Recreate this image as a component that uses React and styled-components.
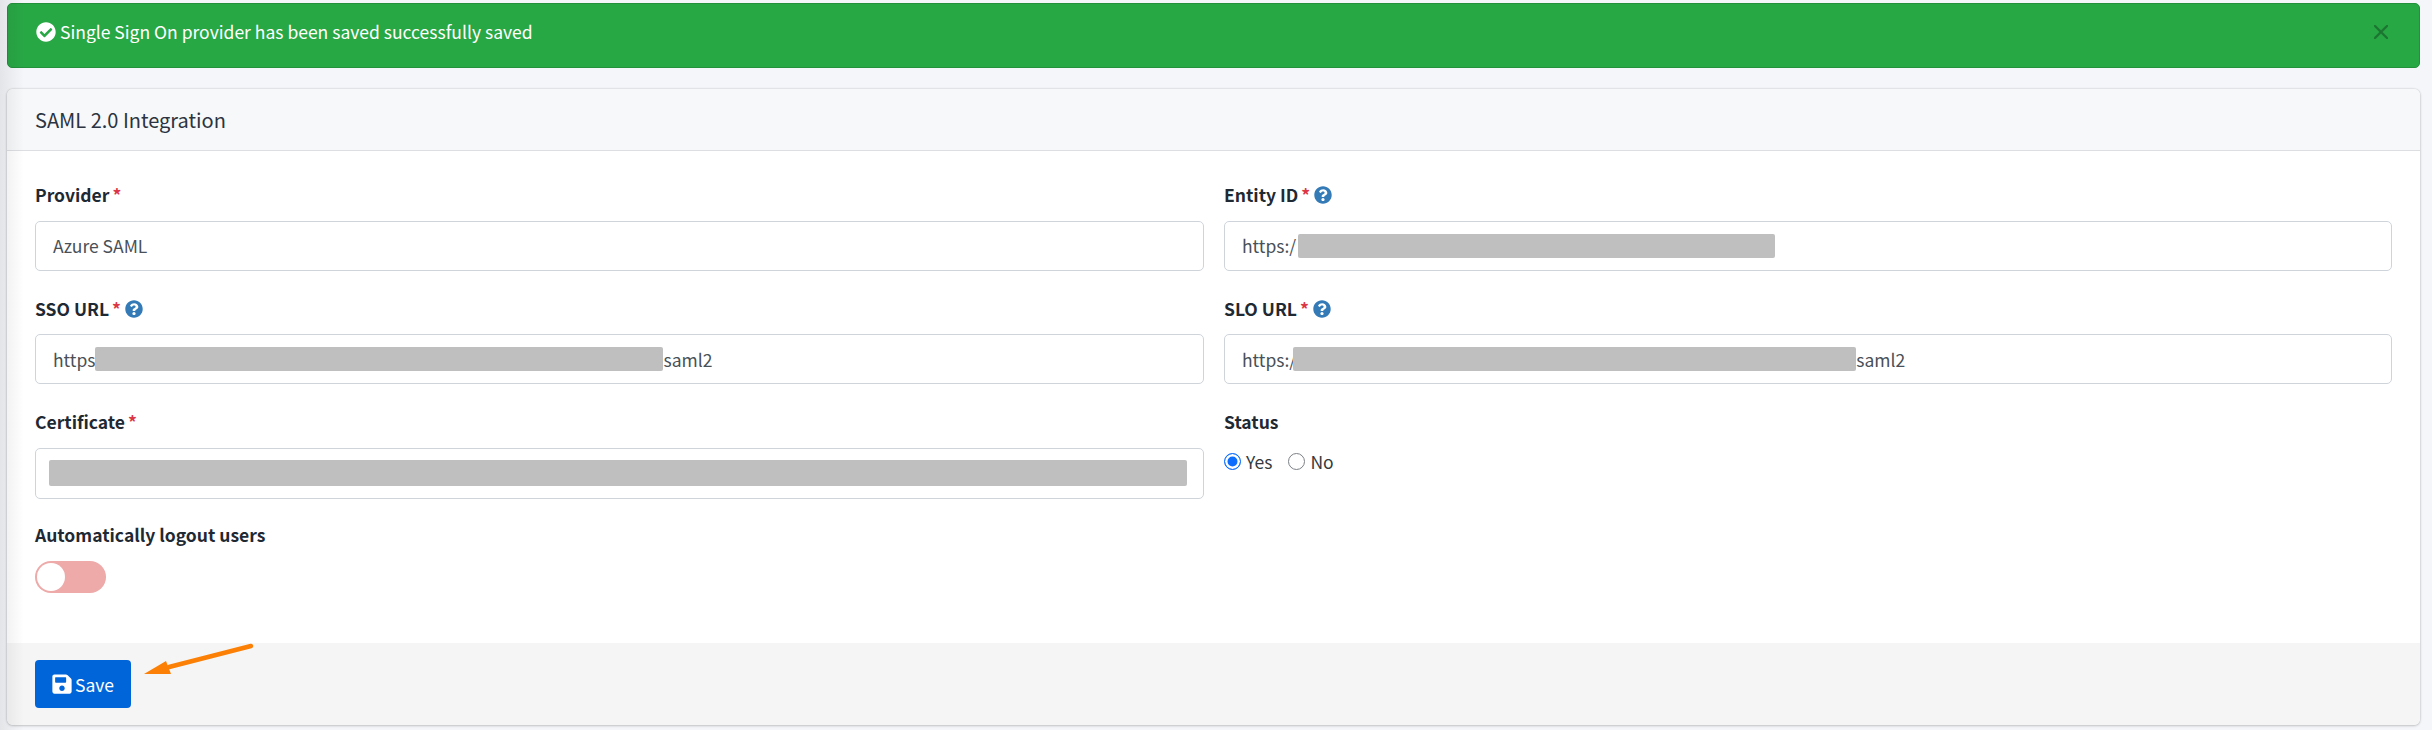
import React from "react";
import styled, { createGlobalStyle } from "styled-components";
import { FaCheckCircle, FaQuestionCircle, FaSave } from "react-icons/fa";

const GlobalStyle = createGlobalStyle`
  html, body {
    margin: 0;
    background: #f4f6f9;
  }
  body {
    font-family: "Noto Sans CJK SC", "Open Sans", sans-serif;
    font-size: 17.5px;
    color: #212529;
  }
  * {
    box-sizing: border-box;
  }
`;

const App = () => {
  return (
    <Page>
      <GlobalStyle />
      <Alert>
        <AlertMessage>
          <FaCheckCircle size={20} />
          Single Sign On provider has been saved successfully saved
        </AlertMessage>
        <CloseIcon viewBox="0 0 16 16">
          <path d="M.293.293a1 1 0 0 1 1.414 0L8 6.586 14.293.293a1 1 0 1 1 1.414 1.414L9.414 8l6.293 6.293a1 1 0 0 1-1.414 1.414L8 9.414l-6.293 6.293a1 1 0 0 1-1.414-1.414L6.586 8 .293 1.707a1 1 0 0 1 0-1.414z" />
        </CloseIcon>
      </Alert>

      <Card>
        <CardHeader>SAML 2.0 Integration</CardHeader>
        <CardBody>
          <Field>
            <Label>
              Provider<Required>*</Required>
            </Label>
            <Input>Azure SAML</Input>
          </Field>
          <Field>
            <Label>
              Entity ID<Required>*</Required>
              <HelpIcon size={18} />
            </Label>
            <Input>
              https:/
              <Redacted $width={477} $shift={2} />
            </Input>
          </Field>
          <Field>
            <Label>
              SSO URL<Required>*</Required>
              <HelpIcon size={18} />
            </Label>
            <Input>
              https
              <Redacted $width={568} />
              saml2
            </Input>
          </Field>
          <Field>
            <Label>
              SLO URL<Required>*</Required>
              <HelpIcon size={18} />
            </Label>
            <Input>
              https:/
              <Redacted $width={563} $shift={-3} />
              saml2
            </Input>
          </Field>
          <Field>
            <Label>
              Certificate<Required>*</Required>
            </Label>
            <CertificateInput>
              <Redacted $width={1138} $height={26} />
            </CertificateInput>
          </Field>
          <Field>
            <Label>Status</Label>
            <RadioGroup>
              <RadioOption>
                <Radio $checked />
                Yes
              </RadioOption>
              <RadioOption>
                <Radio />
                No
              </RadioOption>
            </RadioGroup>
          </Field>
          <Field>
            <ToggleLabel>Automatically logout users</ToggleLabel>
            <Toggle>
              <ToggleKnob />
            </Toggle>
          </Field>
        </CardBody>
        <CardFooter>
          <SaveButton>
            <FaSave size={22} />
            Save
          </SaveButton>
          <Arrow viewBox="0 0 112 34">
            <path d="M108 3 L26 24" stroke="#fb8005" strokeWidth="4.5" strokeLinecap="round" />
            <path d="M1 31 L23 18 L28 31 Z" fill="#fb8005" />
          </Arrow>
        </CardFooter>
      </Card>
    </Page>
  );
};

const Page = styled.div`
  position: relative;
  height: 730px;
  padding: 3px 12px 0 7px;
  overflow: hidden;

  /* soft shadow the sidebar throws over the left edge */
  &::after {
    content: "";
    position: absolute;
    top: 0;
    bottom: 0;
    left: 0;
    width: 24px;
    background: linear-gradient(to right, rgba(0, 0, 0, 0.07), rgba(0, 0, 0, 0));
    pointer-events: none;
  }
`;

const Alert = styled.div`
  height: 65px;
  display: flex;
  align-items: center;
  justify-content: space-between;
  padding: 0 31px 7px 28px;
  background: #28a745;
  border: 1px solid #23903c;
  border-radius: 5px;
  color: #fff;
`;

const AlertMessage = styled.div`
  display: flex;
  align-items: center;
  gap: 4px;
  line-height: 26px;
`;

const CloseIcon = styled.svg`
  width: 14px;
  height: 14px;
  fill: #000;
  stroke: #000;
  stroke-width: 0.8;
  opacity: 0.3;
`;

const Card = styled.div`
  margin-top: 21px;
  height: 636px;
  display: flex;
  flex-direction: column;
  background: #fff;
  border-radius: 6px;
  box-shadow: 0 0 2px rgba(0, 0, 0, 0.22), 0 1px 3px rgba(0, 0, 0, 0.16);
  overflow: hidden;
`;

const CardHeader = styled.div`
  height: 62px;
  display: flex;
  align-items: center;
  padding: 0 28px;
  font-size: 20px;
  color: #2b3440;
  background: #f7f8fa;
  border-bottom: 1px solid #dcdee1;
`;

const CardBody = styled.div`
  flex: 1;
  display: grid;
  grid-template-columns: 1169px 1168px;
  column-gap: 20px;
  grid-auto-rows: 113.5px;
  align-content: start;
  padding: 31px 0 0 28px;
`;

const Field = styled.div`
  display: flex;
  flex-direction: column;
  align-items: flex-start;
`;

const Label = styled.div`
  height: 26px;
  margin-bottom: 12.5px;
  display: flex;
  align-items: center;
  font-weight: 700;
  line-height: 26px;
  color: #1f2933;
`;

const ToggleLabel = styled(Label)`
  margin-top: -1px;
  margin-bottom: 13.5px;
`;

const Required = styled.span`
  margin-left: 3px;
  color: #dc3545;
  font-weight: 700;
`;

const HelpIcon = styled(FaQuestionCircle)`
  margin-left: 4px;
  color: #337ab7;
`;

const Input = styled.div`
  width: 100%;
  height: 50px;
  display: flex;
  align-items: center;
  padding: 0 17px;
  color: #495057;
  background: #fff;
  border: 1px solid #ced4da;
  border-radius: 5px;
`;

const CertificateInput = styled(Input)`
  height: 51px;
  padding: 0 13px;
`;

const Redacted = styled.span`
  width: ${(p) => p.$width}px;
  height: ${(p) => p.$height || 24}px;
  margin-left: ${(p) => p.$shift || 0}px;
  flex-shrink: 0;
  background: #bfbfbf;
  border-radius: 2px;
`;

const RadioGroup = styled.div`
  display: flex;
  gap: 16px;
  margin-top: 2px;
`;

const RadioOption = styled.div`
  display: flex;
  align-items: center;
  gap: 5px;
  height: 24px;
  color: #343a40;
`;

const Radio = styled.span`
  width: 17px;
  height: 17px;
  border-radius: 50%;
  border: ${(p) => (p.$checked ? "1.5px solid #0d6efd" : "1.5px solid #7b8086")};
  background: ${(p) => (p.$checked ? "#0d6efd" : "#fff")};
  box-shadow: ${(p) => (p.$checked ? "inset 0 0 0 2.5px #fff" : "none")};
`;

const Toggle = styled.div`
  width: 71px;
  height: 32px;
  display: flex;
  align-items: center;
  padding: 0 2px;
  background: #eea9a9;
  border-radius: 16px;
`;

const ToggleKnob = styled.span`
  width: 28px;
  height: 28px;
  background: #fff;
  border-radius: 50%;
`;

const CardFooter = styled.div`
  position: relative;
  height: 82px;
  padding: 17px 28px 0;
  background: #f5f5f6;
`;

const SaveButton = styled.button`
  width: 96px;
  height: 48px;
  display: flex;
  align-items: center;
  justify-content: center;
  gap: 2px;
  padding: 0 1px 0 0;
  font-family: inherit;
  font-size: 17.5px;
  color: #fff;
  background: #0065d9;
  border: none;
  border-radius: 4px;
`;

const Arrow = styled.svg`
  position: absolute;
  left: 136px;
  top: 0;
  width: 112px;
  height: 34px;
`;

export default App;
